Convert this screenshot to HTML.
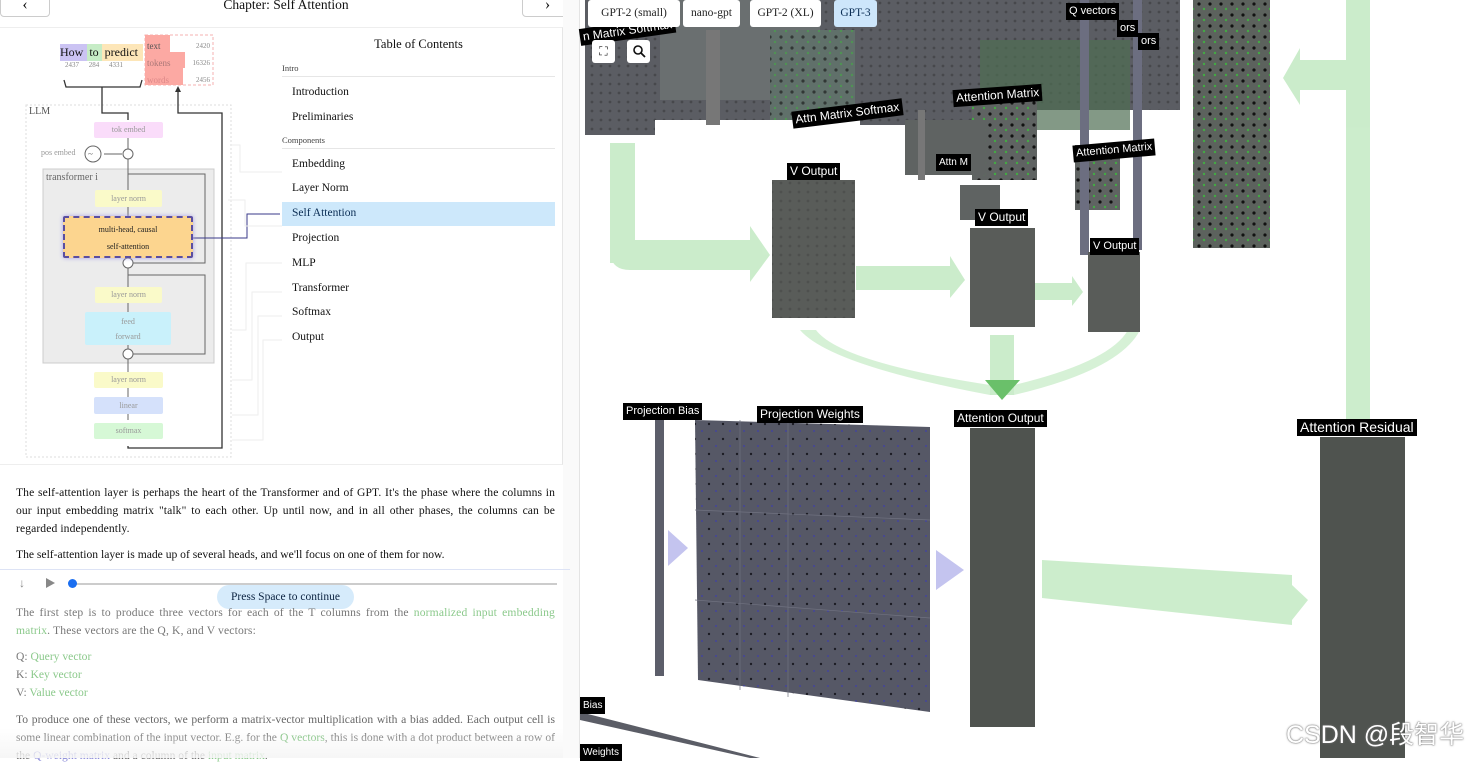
<!DOCTYPE html>
<html><head><meta charset="utf-8">
<style>
*{margin:0;padding:0;box-sizing:border-box}
body{width:1483px;height:758px;overflow:hidden;background:#fff;position:relative;font-family:"Liberation Serif",serif;color:#111}
.a{position:absolute}
.bx{position:absolute;font-size:8px;color:#999;text-align:center;border-radius:2px}
.toc{position:absolute;left:292px;font-size:11.5px;color:#111}
p.t{position:absolute;left:16px;width:539px;font-size:11.6px;line-height:18px;text-align:justify}
.lbl{position:absolute;background:#000;color:#fff;font-family:"Liberation Sans",sans-serif;font-size:12px;padding:1px 3px;white-space:nowrap;line-height:15px}
.btn{position:absolute;background:#fff;border-radius:3px;font-size:11.5px;text-align:center;line-height:27px;color:#222}
</style></head><body>

<div class="a" style="left:0;top:-4px;width:50px;height:21px;border:1px solid #ccc;border-radius:4px;font-size:16px;text-align:center;line-height:16px">‹</div>
<div class="a" style="left:522px;top:-4px;width:51px;height:21px;border:1px solid #ccc;border-radius:4px;font-size:16px;text-align:center;line-height:16px">›</div>
<div class="a" style="left:0;top:-3px;width:572px;text-align:center;font-size:13.5px">Chapter: Self Attention</div>
<div class="a" style="left:0;top:27px;width:563px;height:438px;border-top:1px solid #eee;border-right:1px solid #e6e6e6;border-bottom:1px solid #eee"></div>
<div class="a" style="left:563px;top:0;width:17px;height:758px;background:#fafafa;border-right:1px solid #e4e4e4"></div>

<svg class="a" style="left:0;top:0" width="563" height="465">
 <rect x="26" y="105" width="205" height="352" fill="none" stroke="#ddd" stroke-dasharray="2,2"/>
 <rect x="43" y="169" width="171" height="194" fill="#ececec" stroke="#ccc"/>
 <rect x="145" y="35" width="68" height="50" fill="none" stroke="#f5b0b0" stroke-dasharray="3,2"/>
 <rect x="145" y="35" width="25" height="50" fill="#fca9a3"/><rect x="170" y="52" width="15" height="16" fill="#fca9a3"/><rect x="170" y="68" width="13" height="17" fill="#fca9a3"/>
 <path d="M64 80 L66 87 L140 87 L142 80" fill="none" stroke="#333" stroke-width="1.3"/>
 <path d="M102 87 V113 H128 V120" fill="none" stroke="#333" stroke-width="1.3"/>
 <path d="M128 446 V448 H222 V113 H178 V90" fill="none" stroke="#333" stroke-width="1.3"/>
 <path d="M178 86 l-3 6 h6z" fill="#333"/>
 <path d="M128 138 V420 M128 174 H205 V263 H132 M128 275 H205 V354 H132" fill="none" stroke="#666"/>
 <circle cx="93" cy="154" r="8" fill="#fff" stroke="#666"/><text x="88" y="157" font-size="9" fill="#666">~</text>
 <path d="M104 154 H122" stroke="#666"/>
 <circle cx="128" cy="154" r="5" fill="#fff" stroke="#666"/><circle cx="128" cy="263" r="5" fill="#fff" stroke="#666"/><circle cx="128" cy="354" r="5" fill="#fff" stroke="#666"/>
 <path d="M193 238 H247 V214 H280" fill="none" stroke="#3a3a8a"/>
 <path d="M232 145 H240 V172 H282 M228 200 H245 V226 H282 M232 330 H246 V263 H282 M232 380 H252 V292 H282 M232 415 H258 V316 H282 M232 440 H263 V340 H282" fill="none" stroke="#eee"/>
</svg>
<div class="a" style="left:60px;top:44px;width:27px;height:17px;background:#cbc3f3"></div>
<div class="a" style="left:87px;top:44px;width:15px;height:17px;background:#c6ecc6"></div>
<div class="a" style="left:102px;top:44px;width:41px;height:17px;background:#fde6b8"></div>
<div class="a" style="left:60px;top:45px;font-size:12px">How&nbsp; to&nbsp; predict</div>
<div class="a" style="left:65px;top:61px;font-size:7px;color:#888;word-spacing:8px">2437 284 4331</div>
<div class="a" style="left:147px;top:38px;font-size:9px;line-height:17px;color:#555">text<br><span style="color:#a77">tokens</span><br><span style="color:#d88">words</span></div>
<div class="a" style="left:190px;top:38px;font-size:7px;line-height:17px;color:#888;text-align:right;width:20px">2420<br>16326<br>2456</div>
<div class="a" style="left:29px;top:106px;font-size:10px;color:#555">LLM</div>
<div class="a" style="left:41px;top:148px;font-size:8px;color:#999">pos embed</div>
<div class="a" style="left:46px;top:172px;font-size:10px;color:#666">transformer i</div>
<div class="bx" style="left:94px;top:122px;width:69px;height:16px;background:#fadcfa;line-height:16px">tok embed</div>
<div class="bx" style="left:95px;top:190px;width:67px;height:17px;background:#fafac9;line-height:17px">layer norm</div>
<div class="bx" style="left:63px;top:216px;width:130px;height:42px;background:#fcd58f;border:2px dashed #5a4ea0;box-shadow:0 0 4px #a8a0e8;color:#222;line-height:17px;padding-top:3px">multi-head, causal<br>self-attention</div>
<div class="bx" style="left:95px;top:287px;width:67px;height:16px;background:#fafac9;line-height:16px">layer norm</div>
<div class="bx" style="left:85px;top:312px;width:86px;height:33px;background:#c9f1fb;line-height:15px;padding-top:2px">feed<br>forward</div>
<div class="bx" style="left:94px;top:372px;width:69px;height:16px;background:#fafac9;line-height:16px">layer norm</div>
<div class="bx" style="left:94px;top:397px;width:69px;height:17px;background:#d5e1fb;line-height:17px">linear</div>
<div class="bx" style="left:94px;top:423px;width:69px;height:16px;background:#d6f8d6;line-height:16px">softmax</div>

<div class="a" style="left:282px;top:37px;width:273px;text-align:center;font-size:12.5px">Table of Contents</div>
<div class="a" style="left:282px;top:63px;font-size:8.5px;color:#444">Intro</div>
<div class="a" style="left:282px;top:76px;width:273px;border-top:1px solid #e6e6e6"></div>
<div class="toc" style="top:86px">Introduction</div>
<div class="toc" style="top:111px">Preliminaries</div>
<div class="a" style="left:282px;top:135px;font-size:8.5px;color:#444">Components</div>
<div class="a" style="left:282px;top:148px;width:273px;border-top:1px solid #e6e6e6"></div>
<div class="toc" style="top:158px">Embedding</div>
<div class="toc" style="top:182px">Layer Norm</div>
<div class="a" style="left:282px;top:202px;width:273px;height:24px;background:#cde8fb"></div>
<div class="toc" style="top:207px;color:#0b2e55">Self Attention</div>
<div class="toc" style="top:232px">Projection</div>
<div class="toc" style="top:257px">MLP</div>
<div class="toc" style="top:282px">Transformer</div>
<div class="toc" style="top:306px">Softmax</div>
<div class="toc" style="top:331px">Output</div>

<p class="t" style="top:484px;letter-spacing:0.1px">The self-attention layer is perhaps the heart of the Transformer and of GPT. It's the phase where the columns in our input embedding matrix "talk" to each other. Up until now, and in all other phases, the columns can be regarded independently.</p>
<p class="t" style="top:546px">The self-attention layer is made up of several heads, and we'll focus on one of them for now.</p>
<div class="a" style="left:0;top:569px;width:570px;border-top:1px solid #dde3f5"></div>
<div class="a" style="left:19px;top:576px;font-size:12px;color:#888">↓</div>
<div class="a" style="left:46px;top:578px;width:0;height:0;border-left:9px solid #888;border-top:5px solid transparent;border-bottom:5px solid transparent"></div>
<div class="a" style="left:72px;top:583px;width:485px;height:2px;background:#ccc"></div>
<div class="a" style="left:68px;top:579px;width:9px;height:9px;border-radius:50%;background:#1a6ef0"></div>
<div class="a" style="left:217px;top:585px;width:137px;height:24px;border-radius:12px;background:#d6ebfb;font-size:11.5px;text-align:center;line-height:24px;color:#0b2240">Press Space to continue</div>
<p class="t" style="top:604px;color:#777;letter-spacing:0.15px">The first step is to produce three vectors for each of the T columns from the <span style="color:#8bc98b">normalized input embedding matrix</span>. These vectors are the Q, K, and V vectors:</p>
<p class="t" style="top:648px;color:#777">Q: <span style="color:#8bc98b">Query vector</span><br>K: <span style="color:#8bc98b">Key vector</span><br>V: <span style="color:#8bc98b">Value vector</span></p>
<p class="t" style="top:711px;color:#666">To produce one of these vectors, we perform a matrix-vector multiplication with a bias added. Each output cell is some linear combination of the input vector. E.g. for the <span style="color:#6bb86b">Q vectors</span>, this is done with a dot product between a row of the <span style="color:#8888d8">Q-weight matrix</span> and a column of the <span style="color:#8bc98b">input matrix</span>.</p>
<div class="a" style="left:0;top:728px;width:563px;height:30px;background:linear-gradient(rgba(255,255,255,0),rgba(245,245,245,.9))"></div>

<svg class="a" style="left:580px;top:0" width="903" height="758">
 <defs>
  <pattern id="d" width="9" height="9" patternUnits="userSpaceOnUse"><circle cx="3" cy="3" r="1.4" fill="#222"/></pattern>
  <pattern id="g" width="11" height="11" patternUnits="userSpaceOnUse"><circle cx="3" cy="4" r="1.6" fill="#111"/><circle cx="8" cy="9" r="1.2" fill="#4a4"/></pattern>
  <pattern id="p" width="14" height="15" patternUnits="userSpaceOnUse"><circle cx="3" cy="4" r="1.2" fill="#1c1c24"/><circle cx="10" cy="11" r="1" fill="#44449a"/></pattern>
 </defs>
 <path d="M5 0 H600 V110 H420 V125 H280 V120 H75 V135 H5Z" fill="#5b5d63"/>
 <path d="M5 0 H600 V110 H420 V125 H280 V120 H75 V135 H5Z" fill="url(#d)" opacity=".35"/>
 <rect x="80" y="0" width="160" height="100" fill="#6a6f70"/>
 <rect x="190" y="30" width="85" height="90" fill="#60706a"/><rect x="190" y="30" width="85" height="90" fill="url(#g)" opacity=".6"/>
 <rect x="400" y="40" width="150" height="90" fill="#4e6e52" opacity=".7"/>
 <rect x="392" y="100" width="65" height="80" fill="#5f6362"/><rect x="392" y="100" width="65" height="80" fill="url(#g)"/>
 <rect x="325" y="120" width="80" height="55" fill="#5f6362"/>
 <rect x="380" y="185" width="40" height="35" fill="#5f6362"/>
 <rect x="495" y="145" width="45" height="65" fill="#5f6362"/><rect x="495" y="145" width="45" height="65" fill="url(#g)"/>
 <rect x="613" y="0" width="77" height="248" fill="#5c625d"/><rect x="613" y="0" width="77" height="248" fill="url(#g)"/>
 <rect x="500" y="0" width="9" height="255" fill="#6c6e80"/><rect x="553" y="0" width="9" height="250" fill="#6c6e80"/>
 <rect x="126" y="30" width="14" height="95" fill="#777"/><rect x="338" y="110" width="7" height="70" fill="#777"/>
 <g fill="#c9ecc9" opacity=".95">
  <rect x="30" y="143" width="25" height="120"/>
  <path d="M30 240 H170 V226 L190 255 L170 282 V270 H50 Q30 270 30 250Z"/>
  <path d="M276 266 H370 V256 L385 280 L370 298 V290 H276Z"/>
  <path d="M455 283 H492 V276 L503 292 L492 306 V300 H455Z"/>
  <rect x="766" y="0" width="24" height="420"/>
  <path d="M766 60 H720 V48 L703 78 L720 105 V90 H766Z"/>
  <path d="M462 560 L712 575 V585 L728 600 L712 620 V625 L462 598Z"/>
  <rect x="410" y="335" width="24" height="60"/>
  <path d="M220 330 Q250 365 410 395 L434 395 Q540 370 560 330 L548 330 Q530 362 434 385 L410 385 Q260 362 236 330Z" opacity=".8"/>
 </g>
 <path d="M405 380 L422 400 L440 380Z" fill="#6ac06a"/>
 <path d="M88 530 L108 548 L88 566Z M356 550 L384 570 L356 590Z" fill="#c4c4ef"/>
 <rect x="192" y="180" width="83" height="138" fill="#595c59"/><rect x="192" y="180" width="83" height="138" fill="url(#d)" opacity=".2"/>
 <rect x="390" y="228" width="65" height="99" fill="#595c59"/>
 <rect x="508" y="252" width="52" height="80" fill="#595c59"/>
 <rect x="75" y="418" width="9" height="258" fill="#5c5e6a"/>
 <path d="M115 420 L350 427 L350 712 L118 680Z" fill="#565866"/>
 <path d="M115 420 L350 427 L350 712 L118 680Z" fill="url(#p)"/>
 <path d="M160 420 V690 M208 420 V697 M115 510 L350 520 M115 600 L350 618" stroke="#707280" stroke-width=".7"/>
 <rect x="390" y="428" width="65" height="299" fill="#4f534f"/>
 <rect x="740" y="437" width="85" height="321" fill="#4f534f"/>
 <path d="M0 712 L180 758 L170 758 L0 720Z" fill="#5b5d66"/>
</svg>
<div class="lbl" style="left:580px;top:29px;transform:rotate(-8deg);transform-origin:left">n Matrix Softmax</div>
<div class="lbl" style="left:792px;top:105px;transform:rotate(-7deg)">Attn Matrix Softmax</div>
<div class="lbl" style="left:953px;top:87px;transform:rotate(-4deg)">Attention Matrix</div>
<div class="lbl" style="left:1066px;top:3px;font-size:11px">Q vectors</div>
<div class="lbl" style="left:1117px;top:20px;font-size:11px">ors</div>
<div class="lbl" style="left:1138px;top:33px;font-size:11px">ors</div>
<div class="lbl" style="left:936px;top:154px;font-size:10px">Attn M</div>
<div class="lbl" style="left:1073px;top:142px;font-size:11px;transform:rotate(-5deg)">Attention Matrix</div>
<div class="lbl" style="left:787px;top:163px">V Output</div>
<div class="lbl" style="left:975px;top:209px">V Output</div>
<div class="lbl" style="left:1090px;top:238px;font-size:11px">V Output</div>
<div class="lbl" style="left:623px;top:403px;font-size:11px">Projection Bias</div>
<div class="lbl" style="left:757px;top:406px">Projection Weights</div>
<div class="lbl" style="left:954px;top:410px">Attention Output</div>
<div class="lbl" style="left:1297px;top:419px;font-size:14px">Attention Residual</div>
<div class="lbl" style="left:580px;top:697px;font-size:10px">Bias</div>
<div class="lbl" style="left:580px;top:744px;font-size:10px">Weights</div>

<div class="btn" style="left:588px;top:0;width:92px">GPT-2 (small)</div>
<div class="btn" style="left:683px;top:0;width:57px">nano-gpt</div>
<div class="btn" style="left:750px;top:0;width:71px">GPT-2 (XL)</div>
<div class="btn" style="left:834px;top:0;width:43px;background:#cde6fb;color:#0b2e55">GPT-3</div>
<div class="btn" style="left:592px;top:40px;width:23px;height:23px;line-height:23px;font-size:12px">⛶</div>
<div class="btn" style="left:627px;top:40px;width:23px;height:23px;line-height:23px">
 <svg width="14" height="14" style="margin-top:4px"><circle cx="6" cy="6" r="4" fill="none" stroke="#111" stroke-width="1.6"/><path d="M9 9 L13 13" stroke="#111" stroke-width="1.8"/></svg></div>

<div class="a" style="left:1286px;top:715px;font-family:'Liberation Sans','Noto Sans CJK SC',sans-serif;font-size:25px;color:#fff;text-shadow:0 0 2px #777,0 0 1px #555">CSDN @段智华</div>
</body></html>
